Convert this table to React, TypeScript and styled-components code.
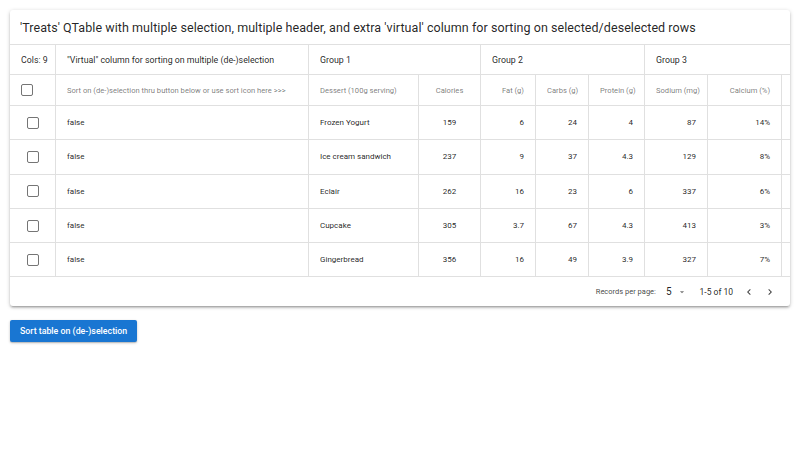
import React from "react";
import styled, { createGlobalStyle } from "styled-components";

const Global = createGlobalStyle`
  html, body { margin: 0; padding: 0; background: #fff; }
  body { font-family: Roboto, "Noto Sans", Arial, sans-serif; color: rgba(0,0,0,0.87); }
`;

const Page = styled.div`
  padding: 10px;
  display: flex;
  flex-direction: column;
  align-items: flex-start;
`;

const Card = styled.div`
  width: 780px;
  border-radius: 3px;
  background: #fff;
  box-shadow: 0 1px 4px rgba(0,0,0,0.2), 0 2px 2px rgba(0,0,0,0.14), 0 3px 1px -2px rgba(0,0,0,0.12);
  display: flex;
  flex-direction: column;
  overflow: hidden;
`;

const TopBar = styled.div`
  height: 35px;
  box-sizing: border-box;
  display: flex;
  align-items: center;
  padding: 0 10px;
  border-bottom: 1px solid #e0e0e0;
`;

const Title = styled.div`
  font-size: 12.5px;
  font-weight: 400;
  letter-spacing: 0.005em;
  color: rgba(0,0,0,0.87);
  white-space: nowrap;
`;

const Scroll = styled.div`
  width: 100%;
  overflow: hidden;
`;

const Table = styled.table`
  table-layout: fixed;
  border-collapse: separate;
  border-spacing: 0;
  width: 832px;
`;

const Th = styled.th<{ $align?: string; $h?: number; $group?: boolean; $last?: boolean }>`
  height: ${(p) => p.$h ?? 30}px;
  box-sizing: border-box;
  padding: 0 11px;
  text-align: ${(p) => p.$align ?? "left"};
  font-size: ${(p) => (p.$group ? "8.8px" : "7.6px")};
  font-weight: 400;
  color: ${(p) => (p.$group ? "rgba(0,0,0,0.87)" : "rgba(0,0,0,0.54)")};
  border-bottom: 1px solid #e0e0e0;
  border-right: ${(p) => (p.$last ? "none" : "1px solid #e0e0e0")};
  white-space: nowrap;
  overflow: hidden;
  vertical-align: middle;
`;

const Td = styled.td<{ $align?: string; $last?: boolean }>`
  height: 34.3px;
  box-sizing: border-box;
  padding: 0 11px;
  text-align: ${(p) => p.$align ?? "left"};
  font-size: 8px;
  color: rgba(0,0,0,0.87);
  border-bottom: 1px solid #e0e0e0;
  border-right: ${(p) => (p.$last ? "none" : "1px solid #e0e0e0")};
  white-space: nowrap;
  overflow: hidden;
  vertical-align: middle;
`;

const Box = styled.span<{ $offset?: number }>`
  display: inline-block;
  box-sizing: border-box;
  width: 12px;
  height: 12px;
  border: 1.6px solid rgba(0,0,0,0.54);
  border-radius: 2px;
  margin-left: ${(p) => p.$offset ?? 0}px;
  vertical-align: middle;
`;

const Footer = styled.div`
  height: 29px;
  display: flex;
  align-items: center;
  justify-content: flex-end;
  padding-right: 10px;
  font-size: 7.5px;
  color: rgba(0,0,0,0.87);
`;

const Label = styled.span`
  color: rgba(0,0,0,0.75);
  margin-right: 10px;
`;

const Select = styled.span`
  display: inline-flex;
  align-items: center;
  font-size: 10px;
  gap: 5px;
  margin-right: 13px;
`;

const Range = styled.span`
  font-size: 8.5px;
  margin-right: 5px;
`;

const NavBtn = styled.span`
  display: inline-flex;
  width: 21px;
  justify-content: center;
  color: rgba(0,0,0,0.75);
`;

const Button = styled.button`
  margin-top: 14px;
  height: 22px;
  padding: 0 10px;
  background: #1976d2;
  color: #fff;
  border: none;
  border-radius: 2px;
  font-family: Roboto, sans-serif;
  font-size: 8.8px;
  font-weight: 500;
  box-shadow: 0 1px 3px rgba(0,0,0,0.2), 0 1px 1px rgba(0,0,0,0.14);
`;

const rows = [
  ["Frozen Yogurt", 159, 6, 24, 4, 87, "14%"],
  ["Ice cream sandwich", 237, 9, 37, 4.3, 129, "8%"],
  ["Eclair", 262, 16, 23, 6, 337, "6%"],
  ["Cupcake", 305, 3.7, 67, 4.3, 413, "3%"],
  ["Gingerbread", 356, 16, 49, 3.9, 327, "7%"],
];

const widths = [46, 253, 110, 62, 55, 53, 56, 63, 74, 60];

const Chevron = ({ dir }: { dir: "l" | "r" }) => (
  <svg width="12" height="12" viewBox="0 0 24 24">
    <path
      d={dir === "l" ? "M15.4 7.4L14 6l-6 6 6 6 1.4-1.4L10.8 12z" : "M8.6 16.6L13.2 12 8.6 7.4 10 6l6 6-6 6z"}
      fill="currentColor"
    />
  </svg>
);

export default function App() {
  return (
    <Page>
      <Global />
      <Card>
        <TopBar>
          <Title>
            'Treats' QTable with multiple selection, multiple header, and extra 'virtual' column for sorting on selected/deselected rows
          </Title>
        </TopBar>
        <Scroll>
          <Table>
            <colgroup>
              {widths.map((w, i) => (
                <col key={i} style={{ width: w }} />
              ))}
            </colgroup>
            <thead>
              <tr>
                <Th $group $h={30}>Cols: 9</Th>
                <Th $group $h={30}>"Virtual" column for sorting on multiple (de-)selection</Th>
                <Th $group $h={30} colSpan={2}>Group 1</Th>
                <Th $group $h={30} colSpan={3}>Group 2</Th>
                <Th $group $h={30} colSpan={3} $last>Group 3</Th>
              </tr>
              <tr>
                <Th $h={31}><Box /></Th>
                <Th $h={31}>Sort on (de-)selection thru button below or use sort icon here &gt;&gt;&gt;</Th>
                <Th $h={31}>Dessert (100g serving)</Th>
                <Th $h={31} $align="center">Calories</Th>
                <Th $h={31} $align="right">Fat (g)</Th>
                <Th $h={31} $align="right">Carbs (g)</Th>
                <Th $h={31} $align="right">Protein (g)</Th>
                <Th $h={31} $align="right">Sodium (mg)</Th>
                <Th $h={31} $align="right">Calcium (%)</Th>
                <Th $h={31} $last />
              </tr>
            </thead>
            <tbody>
              {rows.map((r) => (
                <tr key={r[0] as string}>
                  <Td><Box $offset={6} /></Td>
                  <Td>false</Td>
                  <Td>{r[0]}</Td>
                  <Td $align="center">{r[1]}</Td>
                  <Td $align="right">{r[2]}</Td>
                  <Td $align="right">{r[3]}</Td>
                  <Td $align="right">{r[4]}</Td>
                  <Td $align="right">{r[5]}</Td>
                  <Td $align="right">{r[6]}</Td>
                  <Td $last />
                </tr>
              ))}
            </tbody>
          </Table>
        </Scroll>
        <Footer>
          <Label>Records per page:</Label>
          <Select>
            5
            <svg width="10" height="10" viewBox="0 0 24 24">
              <path d="M7 10l5 5 5-5z" fill="rgba(0,0,0,0.54)" />
            </svg>
          </Select>
          <Range>1-5 of 10</Range>
          <NavBtn><Chevron dir="l" /></NavBtn>
          <NavBtn><Chevron dir="r" /></NavBtn>
        </Footer>
      </Card>
      <Button>Sort table on (de-)selection</Button>
    </Page>
  );
}
